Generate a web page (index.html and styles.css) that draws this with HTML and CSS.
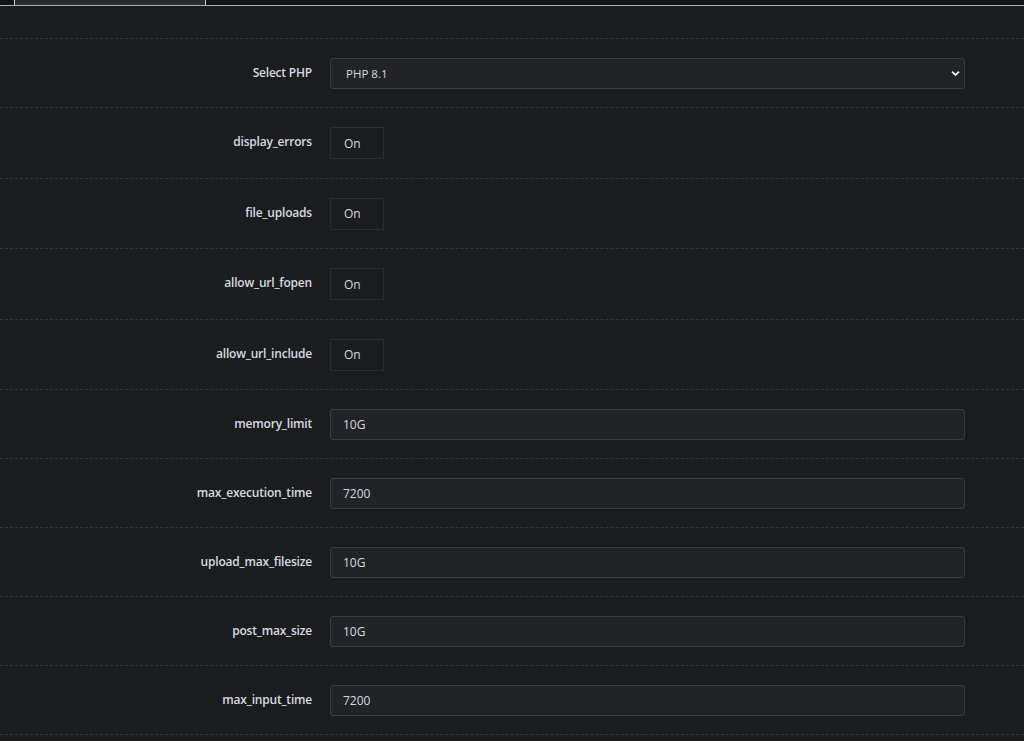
FILE: index.html
```html
<!DOCTYPE html>
<html>
<head>
<meta charset="utf-8">
<link rel="stylesheet" href="styles.css">
</head>
<body>
<div class="topbar">
  <div class="tab"></div>
</div>
<div class="spacer"></div>
<div class="form">
  <div class="row">
    <label class="label">Select PHP</label>
    <div class="control">
      <div class="select">
        <span>PHP 8.1</span>
        <svg class="chev" width="9" height="7" viewBox="0 0 9 7"><path d="M1 1.6 L4.5 5 L8 1.6" fill="none" stroke="#e6e8ec" stroke-width="1.9"/></svg>
      </div>
    </div>
  </div>
  <div class="row tall">
    <label class="label">display_errors</label>
    <div class="control"><div class="toggle">On</div></div>
  </div>
  <div class="row tall">
    <label class="label">file_uploads</label>
    <div class="control"><div class="toggle">On</div></div>
  </div>
  <div class="row tall">
    <label class="label">allow_url_fopen</label>
    <div class="control"><div class="toggle">On</div></div>
  </div>
  <div class="row tall">
    <label class="label">allow_url_include</label>
    <div class="control"><div class="toggle">On</div></div>
  </div>
  <div class="row">
    <label class="label">memory_limit</label>
    <div class="control"><div class="input">10G</div></div>
  </div>
  <div class="row">
    <label class="label">max_execution_time</label>
    <div class="control"><div class="input">7200</div></div>
  </div>
  <div class="row">
    <label class="label">upload_max_filesize</label>
    <div class="control"><div class="input">10G</div></div>
  </div>
  <div class="row">
    <label class="label">post_max_size</label>
    <div class="control"><div class="input">10G</div></div>
  </div>
  <div class="row">
    <label class="label">max_input_time</label>
    <div class="control"><div class="input">7200</div></div>
  </div>
  <div class="row last"></div>
</div>
</body>
</html>
```
FILE: styles.css
```css
html, body {
  margin: 0;
  padding: 0;
  background: #1b1c1e;
  font-family: "Open Sans", "Liberation Sans", sans-serif;
  color: #d8dce2;
  height: 741px;
  overflow: hidden;
}
.topbar {
  height: 5px;
  background: #121315;
  border-bottom: 1px solid #a9adb3;
}
.tab {
  margin-left: 14px;
  width: 190px;
  height: 5px;
  background: #2a2b2f;
  border-left: 1px solid #c8cbd0;
  border-right: 1px solid #c8cbd0;
}
.spacer {
  height: 32px;
}
.form {
  display: flex;
  flex-direction: column;
}
.row {
  display: flex;
  align-items: center;
  border-top: 1px dashed #34363a;
  padding: 19px 0 18px;
}
.row.tall {
  padding: 19px 0 18.5px;
}
.row.last {
  padding: 0;
  height: 20px;
}
.label {
  width: 312px;
  text-align: right;
  font-size: 12px;
  font-weight: 600;
  color: #d6dae0;
  letter-spacing: -0.2px;
  flex-shrink: 0;
  padding-bottom: 3px;
}
.control {
  margin-left: 18px;
  width: 635px;
}
.select, .input {
  box-sizing: border-box;
  height: 31px;
  width: 635px;
  background: #222327;
  border: 1px solid #3a3c41;
  border-radius: 3px;
  display: flex;
  align-items: center;
  padding-left: 12px;
  font-size: 12px;
  color: #d6dae0;
}
.select {
  padding-left: 15px;
  justify-content: space-between;
  padding-right: 4px;
  font-size: 11.5px;
}
.chev {
  display: block;
}
.toggle {
  box-sizing: border-box;
  width: 54px;
  height: 32px;
  border: 1px solid #2b2d30;
  display: flex;
  align-items: center;
  padding-left: 13px;
  font-size: 12px;
  color: #d6dae0;
}
```
